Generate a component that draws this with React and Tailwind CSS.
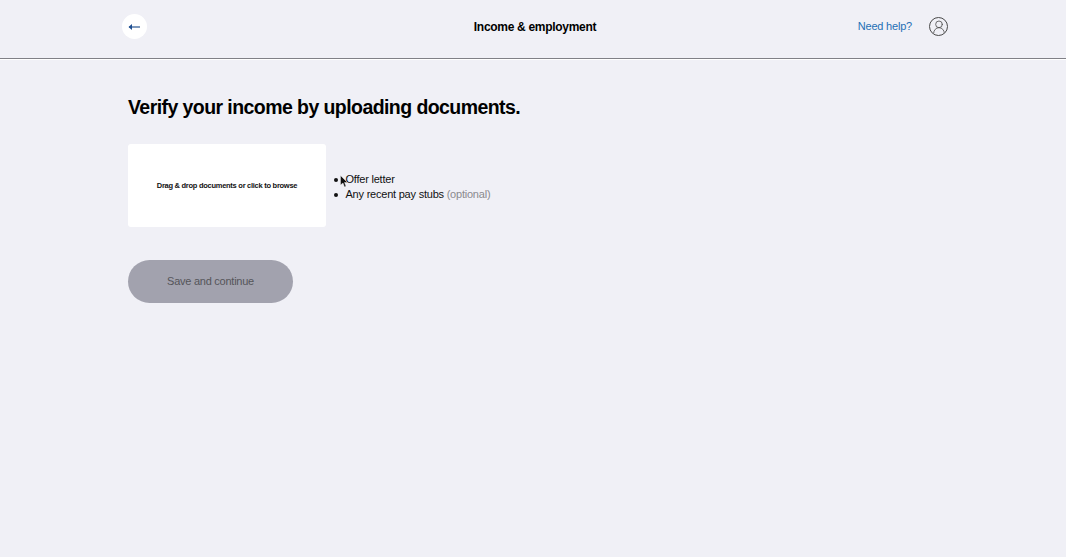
import { UserRound } from "lucide-react";

function Header() {
  return (
    <header className="h-[59px] border-b border-[#808086] shadow-[0_1px_0_#ffffff]">
      <div className="grid h-[53px] grid-cols-[1fr_auto_1fr] items-center pl-[122px] pr-[118px]">
        <button className="flex h-[25px] w-[25px] items-center justify-center rounded-full bg-white pr-[2px]">
          <svg width="12" height="8" viewBox="0 0 12 8" fill="none">
            <path d="M1 4H12" stroke="#28558f" strokeWidth="1.2" />
            <path d="M0.5 4L4 1V7Z" fill="#1f4f92" />
          </svg>
        </button>
        <h1 className="pt-[1px] text-[12px] font-bold tracking-[-0.3px] text-black">Income &amp; employment</h1>
        <div className="flex items-center justify-end gap-[17px]">
          <a className="text-[11px] tracking-[-0.2px] text-[#1f6fb5]">Need help?</a>
          <div className="flex h-[19px] w-[19px] items-center justify-center overflow-hidden rounded-full border border-[#4a4a4a]">
            <UserRound size={16} strokeWidth={1.2} className="text-[#4a4a4a]" />
          </div>
        </div>
      </div>
    </header>
  );
}

function Bullet({ children }) {
  return (
    <li className="flex items-center gap-[7.5px]">
      <span className="h-[4px] w-[4px] rounded-full bg-[#111]" />
      <span>{children}</span>
    </li>
  );
}

export default function App() {
  return (
    <div className="min-h-[557px] bg-[#f0f0f6] font-['Liberation_Sans',sans-serif]">
      <Header />
      <main className="pl-[128px]">
        <h2 className="pt-[36px] text-[19.5px] leading-[25px] font-bold tracking-[-0.57px] text-black">
          Verify your income by uploading documents.
        </h2>
        <div className="mt-[24px] flex items-center gap-2">
          <div className="flex h-[83px] w-[198px] items-center justify-center rounded-[3px] bg-white text-[7.5px] font-bold tracking-[-0.27px] text-[#111]">
            Drag &amp; drop documents or click to browse
          </div>
          <div className="relative pt-[3px]">
            <ul className="text-[11px] leading-[15px] tracking-[-0.22px] text-[#111]">
              <Bullet>Offer letter</Bullet>
              <Bullet>
                Any recent pay stubs <span className="text-[#8a8a8e]">(optional)</span>
              </Bullet>
            </ul>
            <svg className="absolute top-[6px] left-[6px]" width="8" height="13" viewBox="0 0 8 13">
              <path d="M0.5 0.5V10L3 8L4.5 12L6 11.3L4.5 7.5H7.5Z" fill="#111" stroke="#fff" strokeWidth="0.4" />
            </svg>
          </div>
        </div>
        <button className="mt-[33px] h-[43px] w-[165px] rounded-[22px] bg-[#a2a2ae] pb-[1px] text-[11px] tracking-[-0.25px] text-[#55555a]">
          Save and continue
        </button>
      </main>
    </div>
  );
}
